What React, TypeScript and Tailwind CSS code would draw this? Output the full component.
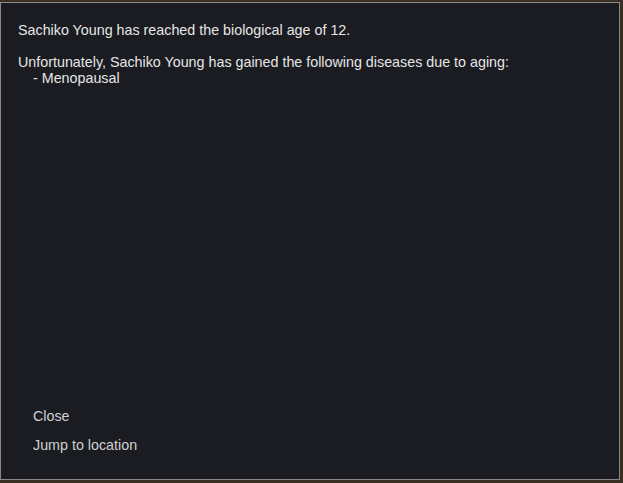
import React from 'react';

const App = () => {
    const diseases = ['Menopausal'];

    return (
        <div className="w-[623px] h-[483px] bg-[#3a2f24] pt-[2px] pr-[3px] pb-[3px] flex" style={{ fontFamily: '"Liberation Sans", Arial, sans-serif' }}>
            {/* Notification panel */}
            <div className="flex-1 flex flex-col justify-between border border-[#8a8883] bg-[#1a1c21] pl-[17px] pr-4 pt-[19px] pb-[26px]">
                <div className="text-[14.3px] leading-4 text-[#e6e6e6]">
                    <p>Sachiko Young has reached the biological age of 12.</p>
                    <p className="mt-4">Unfortunately, Sachiko Young has gained the following diseases due to aging:</p>
                    {diseases.map((d) => (
                        <p key={d} className="pl-[15px]">- {d}</p>
                    ))}
                </div>
                <div className="flex flex-col items-start gap-[13px] pl-[15px] text-[14.3px] leading-4 text-[#cfd0d2]">
                    <button className="cursor-pointer">Close</button>
                    <button className="cursor-pointer">Jump to location</button>
                </div>
            </div>
        </div>
    );
};

export default App;
